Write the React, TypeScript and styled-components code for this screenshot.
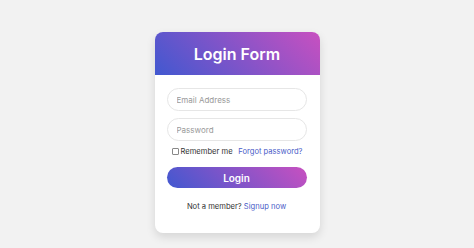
import React from 'react'
import styled, { createGlobalStyle } from 'styled-components'

const GlobalStyle = createGlobalStyle`
    html, body {
        margin: 0;
        padding: 0;
        background: #f2f2f2;
        font-family: Inter, 'Open Sans', sans-serif;
    }
`

export default function App() {
    return (
        <>
            <GlobalStyle />
            <Page>
                <Card>
                    <Header>Login Form</Header>
                    <Form>
                        <Input placeholder="Email Address" />
                        <Input placeholder="Password" type="password" />
                        <OptionsRow>
                            <Remember>
                                <Check type="checkbox" />
                                Remember me
                            </Remember>
                            <Link href="#">Forgot password?</Link>
                        </OptionsRow>
                        <LoginButton>Login</LoginButton>
                        <Signup>
                            Not a member? <Link href="#">Signup now</Link>
                        </Signup>
                    </Form>
                </Card>
            </Page>
        </>
    )
}

const Page = styled.div`
    width: 474px;
    height: 248px;
    display: flex;
    justify-content: center;
    padding-top: 32px;
    box-sizing: border-box;
`

const Card = styled.div`
    width: 165px;
    height: 201px;
    background: #fff;
    border-radius: 8px;
    overflow: hidden;
    box-shadow: 0 4px 10px rgba(0, 0, 0, 0.12);
    display: flex;
    flex-direction: column;
`

const Header = styled.div`
    height: 43px;
    display: flex;
    align-items: center;
    justify-content: center;
    color: #fff;
    font-size: 16px;
    font-weight: 600;
    background: linear-gradient(-135deg, #c850c0, #4158d0);
`

const Form = styled.div`
    padding: 13px 13px 0 12px;
    display: flex;
    flex-direction: column;
`

const Input = styled.input`
    height: 23px;
    box-sizing: border-box;
    border: 1px solid #e6e6e6;
    border-radius: 12px;
    padding: 0 9px;
    font-family: inherit;
    font-size: 8px;
    outline: none;
    margin-bottom: 7px;
    &::placeholder {
        color: #999;
    }
`

const OptionsRow = styled.div`
    display: flex;
    align-items: center;
    justify-content: space-between;
    padding: 0 4px 0 5px;
    height: 10px;
    margin-top: -2px;
    font-size: 7.6px;
`

const Remember = styled.label`
    display: flex;
    align-items: center;
    color: #333;
`

const Check = styled.input`
    appearance: none;
    width: 7px;
    height: 7px;
    margin: 0 2px 0 0;
    border: 1px solid #888;
    border-radius: 1px;
    background: #fff;
`

const Link = styled.a`
    color: #4a5cc8;
    text-decoration: none;
`

const LoginButton = styled.button`
    margin-top: 11px;
    height: 21px;
    border: none;
    border-radius: 11px;
    color: #fff;
    font-family: inherit;
    font-size: 10px;
    font-weight: 600;
    background: linear-gradient(-135deg, #c850c0, #4158d0);
`

const Signup = styled.div`
    margin-top: 14px;
    text-align: center;
    font-size: 7.6px;
    color: #333;
`
